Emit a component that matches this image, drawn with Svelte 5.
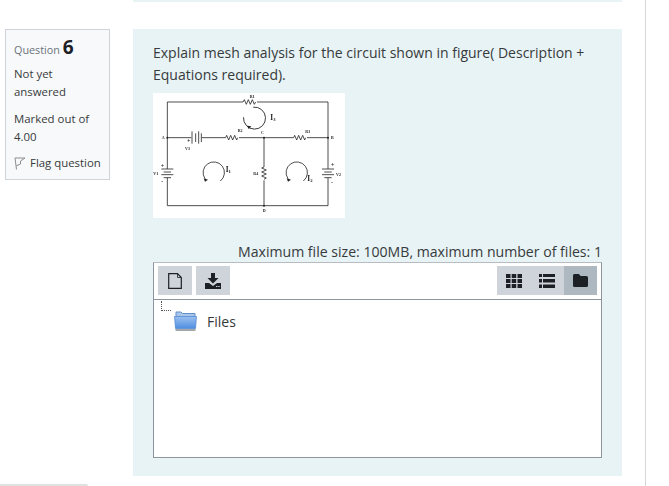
<script>
  const views = [
    { name: "grid", active: false },
    { name: "list", active: false },
    { name: "tree", active: true }
  ];
</script>

<div class="page">
  <aside class="info">
    <h3 class="qno"><span class="lbl">Question</span> <b>6</b></h3>
    <div class="state">Not yet answered</div>
    <div class="grade">Marked out of 4.00</div>
    <div class="flag">
      <svg width="12" height="14" viewBox="0 0 12 14">
        <path d="M2.5 13.5 L1 2 L11 2 L6.5 5 L6.5 8 L2 10" fill="none" stroke="#8a8f94" stroke-width="1" />
      </svg>
      <span>Flag question</span>
    </div>
  </aside>

  <main class="content">
    <div class="strip"></div>
    <section class="panel">
      <p class="question">Explain mesh analysis for the circuit shown in figure( Description + Equations required).</p>

      <svg class="circuit" width="192" height="125" viewBox="10 10 576 375">
        <rect x="10" y="10" width="576" height="375" fill="#fff" />
        <g fill="none" stroke="#222" stroke-width="2.4">
          <path d="M280 37 H53 V238 M53 264 V348 H535 V264 M535 238 V37 H322" />
          <path d="M280 37 l4 -7 l6 14 l6 -14 l6 14 l6 -14 l6 14 l4 -7" />
          <path d="M53 144 H125 M156 144 H228 M268 144 H432 M472 144 H535" />
          <path d="M228 144 l3 -7 l6 14 l6 -14 l6 14 l6 -14 l6 14 l3 -7" />
          <path d="M432 144 l3 -7 l6 14 l6 -14 l6 14 l6 -14 l6 14 l3 -7" />
          <path d="M343 144 V232 M343 272 V348" />
          <path d="M343 232 l-7 3 l14 6 l-14 6 l14 6 l-14 6 l14 6 l-7 4" />
          <path d="M127 125 V162 M138 131 V157 M147 125 V162 M155 131 V157" />
          <path d="M35 238 H71 M42 247 H64 M35 255 H71 M42 264 H64" />
          <path d="M517 238 H553 M524 247 H546 M517 255 H553 M524 264 H546" />
          <path d="M296 113 A33 33 0 1 0 288 72" transform="rotate(55 318 84)" />
          <path d="M166 267 A32 32 0 1 1 212 274" />
          <path d="M415 267 A32 32 0 1 1 461 274" />
        </g>
        <g fill="#222">
          <circle cx="53" cy="144" r="3" /><circle cx="343" cy="144" r="3" />
          <circle cx="535" cy="144" r="3" /><circle cx="343" cy="348" r="3" />
          <path d="M292 108 l13 2 l-8 8 z" /><path d="M162 266 l13 4 l-9 6 z" /><path d="M411 266 l13 4 l-9 6 z" />
        </g>
        <g class="tiny">
          <text x="300" y="24">R1</text>
          <text x="264" y="128">R2</text>
          <text x="467" y="130">R3</text>
          <text x="311" y="255">R4</text>
          <text x="36" y="147">A</text>
          <text x="334" y="132">C</text>
          <text x="544" y="149">B</text>
          <text x="339" y="366">D</text>
          <text x="106" y="180">V3</text>
          <text x="11" y="256">V1</text>
          <text x="559" y="258">V2</text>
        </g>
        <g class="sign">
          <text x="112" y="161">+</text>
          <text x="33" y="234">+</text>
          <text x="35" y="281">-</text>
          <text x="544" y="231">+</text>
          <text x="544" y="282">-</text>
        </g>
        <g class="mark">
          <text x="362" y="92">I<tspan class="sub" dy="2">3</tspan></text>
          <text x="228" y="248">I<tspan class="sub" dy="2">1</tspan></text>
          <text x="473" y="275">I<tspan class="sub" dy="2">2</tspan></text>
        </g>
      </svg>

      <div class="limits">Maximum file size: 100MB, maximum number of files: 1</div>

      <div class="filemanager">
        <div class="toolbar">
          <div class="actions">
            <button aria-label="New file">
              <svg width="14" height="16" viewBox="0 0 14 16">
                <path d="M0.7 0.7 H9.5 L13.3 4.5 V15.3 H0.7 Z" fill="none" stroke="#1d2125" stroke-width="1.2" />
                <path d="M9.5 1 V4.5 H13" fill="none" stroke="#1d2125" stroke-width="0.8" />
              </svg>
            </button>
            <button aria-label="Download">
              <svg width="16" height="16" viewBox="0 0 16 16">
                <path d="M6 0 H10 V5 H13.5 L8 10.5 L2.5 5 H6 Z" fill="#1d2125" />
                <path d="M0 10 H4 L8 13 L12 10 H16 V16 H0 Z" fill="#1d2125" />
                <rect x="11" y="13" width="1.5" height="1" fill="#cfd4d9" />
                <rect x="13.2" y="13" width="1.5" height="1" fill="#cfd4d9" />
              </svg>
            </button>
          </div>
          <div class="views">
            {#each views as v}
              <button class:active={v.active} aria-label={v.name}>
                {#if v.name === "grid"}
                  <svg width="16" height="14" viewBox="0 0 16 14" fill="#1d2125">
                    <path d="M0 0 H4.5 V4 H0 Z M5.7 0 H10.2 V4 H5.7 Z M11.5 0 H16 V4 H11.5 Z M0 5 H4.5 V9 H0 Z M5.7 5 H10.2 V9 H5.7 Z M11.5 5 H16 V9 H11.5 Z M0 10 H4.5 V14 H0 Z M5.7 10 H10.2 V14 H5.7 Z M11.5 10 H16 V14 H11.5 Z" />
                  </svg>
                {:else if v.name === "list"}
                  <svg width="16" height="14" viewBox="0 0 16 14" fill="#1d2125">
                    <path d="M0 0 H3 V3 H0 Z M4 0 H16 V3 H4 Z M0 5 H3 V8.5 H0 Z M4 5 H16 V8.5 H4 Z M0 10.5 H3 V14 H0 Z M4 10.5 H16 V14 H4 Z" />
                  </svg>
                {:else}
                  <svg width="15" height="13" viewBox="0 0 15 13" fill="#1d2125">
                    <path d="M1.5 0 H6 L7.5 2 H13.5 Q15 2 15 3.5 V11.5 Q15 13 13.5 13 H1.5 Q0 13 0 11.5 V1.5 Q0 0 1.5 0 Z" />
                  </svg>
                {/if}
              </button>
            {/each}
          </div>
        </div>
        <div class="tree">
          <span class="dots"></span>
          <svg class="folder" width="23" height="20" viewBox="0 0 23 20">
            <defs>
              <linearGradient id="fg" x1="0" y1="0" x2="0" y2="1">
                <stop offset="0" stop-color="#9cc0f0" />
                <stop offset="1" stop-color="#4f8ee0" />
              </linearGradient>
            </defs>
            <path d="M2 1 H7 L8.5 2.5 H21 V7 H2 Z" fill="#a9c6ea" stroke="#5f8fcb" stroke-width="1" />
            <path d="M0.5 5.5 H22.5 L21.5 17.5 H1.5 Z" fill="url(#fg)" stroke="#4a82cf" stroke-width="0.7" />
            <path d="M1.5 19 H21.5" stroke="#a5a8aa" stroke-width="2" />
          </svg>
          <span class="name">Files</span>
        </div>
      </div>
    </section>
  </main>
  <div class="rail"></div>
  <div class="corner"></div>
</div>

<style>
  :global(body) {
    background: #fff;
    overflow: hidden;
  }
  .page {
    position: relative;
    display: flex;
    align-items: flex-start;
    width: 669px;
    height: 486px;
    overflow: hidden;
    font-family: "Open Sans", "Noto Sans", sans-serif;
    color: #373a3c;
  }
  .info {
    box-sizing: border-box;
    flex: none;
    width: 105px;
    height: 151px;
    margin: 29px 23px 0 5px;
    padding: 5px 8px;
    background: #f8f9fa;
    border: 1px solid #ced4da;
    font-size: 11.4px;
    line-height: 18px;
  }
  .qno {
    margin: 0 0 3px;
    font-size: 11px;
    font-weight: 400;
    line-height: 24px;
  }
  .lbl {
    color: #6a737b;
    font-size: 10.8px;
  }
  .qno b {
    font-size: 19px;
    font-weight: 700;
    color: #1d2125;
  }
  .state {
    margin-bottom: 9px;
  }
  .grade {
    margin-bottom: 8px;
  }
  .flag {
    display: flex;
    align-items: center;
    gap: 4px;
  }
  .content {
    flex: none;
    width: 489px;
  }
  .strip {
    height: 2px;
    margin-bottom: 27px;
    background: #e7f3f5;
  }
  .panel {
    box-sizing: border-box;
    height: 447px;
    padding: 13px 20px 0;
    background: #e7f3f5;
  }
  .question {
    margin: 0 0 7px;
    font-size: 14px;
    line-height: 22px;
  }
  .circuit {
    display: block;
    margin-bottom: 23px;
    filter: blur(0.4px);
  }
  .tiny text {
    font-family: "Liberation Serif", serif;
    font-size: 12px;
    font-weight: 700;
    fill: #222;
  }
  .sign text {
    font-family: "Liberation Serif", serif;
    font-size: 18px;
    font-weight: 700;
    fill: #222;
  }
  .mark text {
    font-family: "Liberation Serif", serif;
    font-size: 22px;
    font-weight: 700;
    fill: #222;
  }
  .mark .sub {
    font-size: 14px;
  }
  .limits {
    margin-bottom: -1px;
    font-size: 14.1px;
    line-height: 22px;
    text-align: right;
    white-space: nowrap;
  }
  .filemanager {
    box-sizing: border-box;
    width: 449px;
    height: 196px;
    background: #fff;
    border: 1px solid #8f959e;
    border-top-color: #b8bcc2;
  }
  .toolbar {
    display: flex;
    justify-content: space-between;
    box-sizing: border-box;
    height: 37px;
    padding: 3px 4px;
    border-bottom: 1px solid #8f959e;
  }
  .actions {
    display: flex;
    gap: 4px;
  }
  .views {
    display: flex;
  }
  .views button {
    width: 33.33px;
  }
  button {
    display: flex;
    align-items: center;
    justify-content: center;
    width: 34px;
    height: 29px;
    padding: 0;
    border: 0;
    background: #ced4da;
  }
  button.active {
    background: #aeb8c0;
  }
  .tree {
    position: relative;
    display: flex;
    align-items: center;
    height: 42px;
    padding-left: 20px;
  }
  .dots {
    position: absolute;
    left: 7px;
    top: 1px;
    width: 9px;
    height: 9px;
    border-left: 1px dotted #555;
    border-bottom: 1px dotted #555;
  }
  .folder {
    margin-right: 10px;
  }
  .name {
    font-size: 14px;
  }
  .rail {
    flex: none;
    width: 1px;
    height: 486px;
    margin-left: 23px;
    background: #d5d8db;
  }
  .corner {
    position: absolute;
    left: 0;
    bottom: 0;
    width: 88px;
    height: 2px;
    background: #e0e0e0;
    border-top-right-radius: 2px;
  }
</style>
